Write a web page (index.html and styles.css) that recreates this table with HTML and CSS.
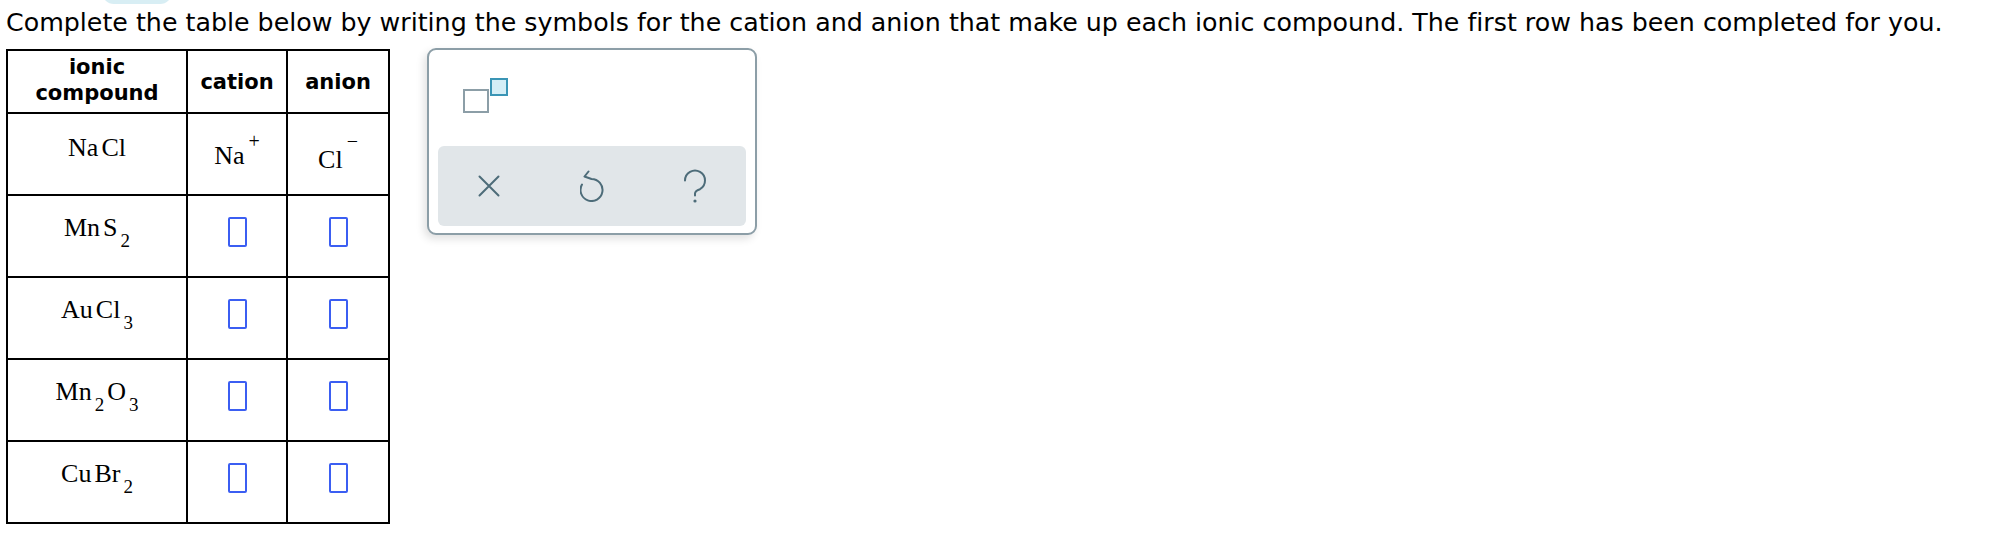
FILE: index.html
```html
<!DOCTYPE html>
<html lang="en">
<head>
<meta charset="utf-8">
<title>Ionic compounds</title>
<link rel="stylesheet" href="styles.css">
</head>
<body>
<div class="page">
  <div class="pill"></div>
  <p class="prompt">Complete the table below by writing the symbols for the cation and anion that make up each ionic compound. The first row has been completed for you.</p>
  <div class="work">
    <table class="chem">
      <thead>
        <tr>
          <th class="col-compound"><div class="hc">ionic<br>compound</div></th>
          <th class="col-cation">cation</th>
          <th class="col-anion">anion</th>
        </tr>
      </thead>
      <tbody>
        <tr>
          <td><div class="c c-first"><span class="el">Na</span><span class="el">Cl</span></div></td>
          <td><div class="c c-ion">Na<span class="charge plus">+</span></div></td>
          <td><div class="c c-ion">Cl<span class="charge minus">−</span></div></td>
        </tr>
        <tr>
          <td><div class="c"><span class="el">Mn</span><span class="el">S</span><span class="sub">2</span></div></td>
          <td><div class="c slot"><span class="box"></span></div></td>
          <td><div class="c slot"><span class="box"></span></div></td>
        </tr>
        <tr>
          <td><div class="c"><span class="el">Au</span><span class="el">Cl</span><span class="sub">3</span></div></td>
          <td><div class="c slot"><span class="box"></span></div></td>
          <td><div class="c slot"><span class="box"></span></div></td>
        </tr>
        <tr>
          <td><div class="c"><span class="el">Mn</span><span class="sub">2</span><span class="el">O</span><span class="sub">3</span></div></td>
          <td><div class="c slot"><span class="box"></span></div></td>
          <td><div class="c slot"><span class="box"></span></div></td>
        </tr>
        <tr>
          <td><div class="c"><span class="el">Cu</span><span class="el">Br</span><span class="sub">2</span></div></td>
          <td><div class="c slot"><span class="box"></span></div></td>
          <td><div class="c slot"><span class="box"></span></div></td>
        </tr>
      </tbody>
    </table>

    <div class="panel">
      <div class="super">
        <span class="sq-base"></span>
        <span class="sq-exp"></span>
      </div>
      <div class="toolbar">
        <button class="tool" aria-label="clear">
          <svg class="ico-x" width="22" height="22" viewBox="0 0 22 22"><path d="M1.5 1.5 L20.5 20.5 M20.5 1.5 L1.5 20.5" fill="none" stroke="currentColor" stroke-width="2" stroke-linecap="round"/></svg>
        </button>
        <button class="tool" aria-label="undo">
          <svg class="ico-undo" width="24" height="32" viewBox="0 0 24 32"><path d="M8.5 1.5 L4.5 6.5 L11.5 9 A11 11 0 1 1 2 14.5" fill="none" stroke="currentColor" stroke-width="2" stroke-linecap="round" stroke-linejoin="round"/></svg>
        </button>
        <button class="tool" aria-label="help">
          <svg class="ico-help" width="24" height="34" viewBox="0 0 24 34"><path d="M2 11.5 A10 10 0 1 1 17 20.2 Q12 22 12 24.5 V26.5" fill="none" stroke="currentColor" stroke-width="2" stroke-linecap="round"/><circle cx="12" cy="32" r="1.6" fill="currentColor"/></svg>
        </button>
      </div>
    </div>
  </div>
</div>
</body>
</html>
```

FILE: styles.css
```css
html, body {
  margin: 0;
  padding: 0;
  background: #fff;
}

.page {
  position: relative;
  padding-left: 6px;
  font-family: "DejaVu Sans", Verdana, sans-serif;
  color: #000;
}

.pill {
  position: absolute;
  top: -20px;
  left: 102px;
  width: 70px;
  height: 24px;
  border-radius: 12px;
  background: #d8eef4;
}

.prompt {
  margin: 0;
  padding-top: 8px;
  font-size: 25.3px;
  line-height: 30px;
  white-space: nowrap;
  font-variant-ligatures: none;
}

.work {
  display: flex;
  align-items: flex-start;
  gap: 37px;
  margin-top: 11px;
}

/* ---------- table ---------- */
.chem {
  border-collapse: separate;
  border-spacing: 0;
  border-left: 2px solid #000;
  border-top: 2px solid #000;
}

.chem th,
.chem td {
  border-right: 2px solid #000;
  border-bottom: 2px solid #000;
  padding: 0;
}

.chem th {
  height: 61px;
  vertical-align: middle;
  text-align: center;
  font-family: "DejaVu Sans", Verdana, sans-serif;
  font-weight: bold;
  font-size: 21px;
  line-height: 26px;
}

.col-compound { width: 178px; }
.col-cation { width: 98px; }
.col-anion { width: 100px; }

.hc {
  padding-bottom: 4px;
}

.chem td {
  vertical-align: top;
}

.c {
  box-sizing: border-box;
  height: 80px;
  padding-top: 17px;
  text-align: center;
  font-family: "Liberation Serif", "Times New Roman", serif;
  font-size: 26px;
  line-height: 30px;
  white-space: nowrap;
}

.c-first { padding-top: 19px; }
.c-ion { padding-top: 27px; }

.el + .el { margin-left: 3px; }
.sub + .el { margin-left: 3px; }

.sub {
  font-size: 19px;
  line-height: 0;
  vertical-align: -11px;
  margin-left: 3px;
}

.charge {
  font-size: 20px;
  line-height: 0;
  margin-left: 4px;
}

.plus { vertical-align: 16px; }
.minus { vertical-align: 20px; }

.slot {
  padding-top: 21px;
  line-height: 0;
}

.box {
  display: block;
  margin: 0 auto;
  width: 15px;
  height: 26px;
  border: 2px solid #3b5ef2;
  border-radius: 2px;
}

/* ---------- panel ---------- */
.panel {
  box-sizing: border-box;
  width: 330px;
  height: 187px;
  margin-top: -1px;
  padding: 28px 9px 0 9px;
  border: 2px solid #8c9ea7;
  border-radius: 9px;
  background: #fff;
  box-shadow: -3px 4px 9px rgba(0, 0, 0, 0.12);
}

.super {
  display: flex;
  align-items: flex-start;
  height: 35px;
  margin-left: 25px;
}

.sq-base {
  box-sizing: border-box;
  width: 26px;
  height: 24px;
  margin-top: 11px;
  border: 2px solid #8c9ea7;
  background: #fff;
}

.sq-exp {
  box-sizing: border-box;
  width: 18px;
  height: 18px;
  margin-left: 1px;
  border: 2px solid #3a95b5;
  background: #d4eef6;
}

.toolbar {
  display: grid;
  grid-template-columns: repeat(3, 1fr);
  align-items: center;
  height: 80px;
  margin-top: 33px;
  border-radius: 6px;
  background: #e1e6e9;
}

.tool {
  display: flex;
  justify-content: center;
  align-items: center;
  padding: 0;
  border: 0;
  background: transparent;
  color: #4d6c79;
}

.tool svg {
  display: block;
}
```
